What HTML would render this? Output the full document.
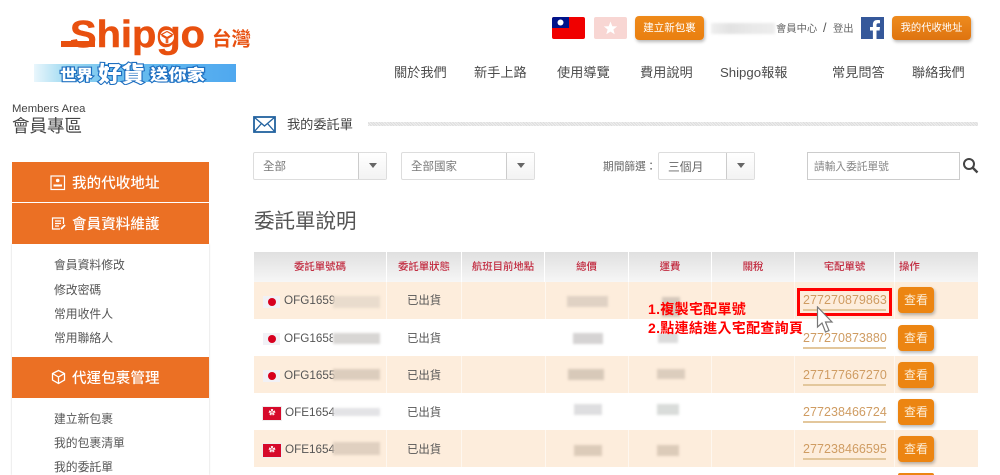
<!DOCTYPE html>
<html lang="zh-Hant"><head><meta charset="utf-8"><title>我的委託單</title>
<style>
html,body{margin:0;padding:0;background:#fff;overflow:hidden}
#p{position:relative;width:1000px;height:475px;overflow:hidden;background:#fff;font-family:"Liberation Sans","Noto Sans CJK TC",sans-serif;color:#555}
#p div,#p span,#p a,#p svg{position:absolute;white-space:nowrap}
.t{line-height:1}
.nav{top:66px;font-size:13.2px;line-height:14px;color:#4d4d4d}
.btn{background:linear-gradient(#ef8a1a,#e97f10);border-radius:4px;color:#fff;text-align:center;box-shadow:1px 2px 3px rgba(0,0,0,.28)}
.sh{left:12px;width:197px;background:#eb7024;color:#fff;font-size:14.5px;font-weight:500;letter-spacing:.1px}
.sh b{position:absolute;left:60px;font-weight:500;line-height:20px;top:12px;white-space:nowrap}
.si{left:54px;font-size:11.8px;line-height:14px;color:#555}
.sel{top:152px;height:26px;border:1px solid #ddd;border-radius:2px;background:#fff}
.sel i{position:absolute;top:0;bottom:0;right:0;width:27px;border-left:1px solid #ccc;background:linear-gradient(#fff,#f3f3f3)}
.sel i:after{content:"";position:absolute;left:10px;top:10px;border-left:4px solid transparent;border-right:4px solid transparent;border-top:5px solid #666}
.sel span{left:9px;top:8px;font-size:11.5px;line-height:13px;color:#777}
.th{top:252px;height:30px;background:linear-gradient(#e0e0e0,#f6f6f6);color:#c22b40;font-size:10.4px;font-weight:500;line-height:32px;text-align:center}
.row{left:254px;width:724px;height:37px}
.o{background:#fdeddc}
.v{top:0;width:1px;height:37px;background:rgba(255,255,255,.55)}
.num{left:284px;font-size:11.7px;line-height:15px;color:#555}
.st{left:407px;font-size:11.4px;line-height:14px;color:#555}
.lk{left:803px;width:83px;font-size:12.5px;line-height:15px;color:#cf9c62;border-bottom:2px solid #e3c79c;padding-bottom:1px;letter-spacing:.04px}
.ck{left:898px;width:36px;height:26px;line-height:26px;font-size:12px;color:#fdeed8;background:#ec8512}
.fl{left:263px;width:17px;height:12px;background:#f1f1f6}
.fl:after{content:"";position:absolute;left:4.5px;top:2px;width:8px;height:8px;border-radius:50%;background:#d7001f}
.hk{left:263px;width:18px;height:13px;background:#d60a2b;outline:1px solid #eee;color:#fff;font-size:7px;line-height:13px;text-align:center}
.bl{filter:blur(1.2px)}
.rd{left:648px;color:#f00;font-weight:700;font-size:14px;line-height:16px;letter-spacing:.3px}
</style></head><body><div id="p">

<!-- logo -->
<svg style="left:55px;top:12px" width="205" height="56" viewBox="0 0 205 56">
<path d="M6 29H40V35H6Z" fill="#e8500f"/>
<text x="15" y="35" font-family="Liberation Sans" font-weight="700" font-size="38" fill="#e8500f" stroke="#e8500f" stroke-width=".5" textLength="135" lengthAdjust="spacingAndGlyphs">Shipgo</text>
<circle cx="112" cy="25" r="7" fill="#fff"/>
<path d="M112 19.500l5.500 3-5.500 3-5.500-3zM106.500 23.500l4.800 2.800v5M117.500 23.500l-4.800 2.800v5" fill="none" stroke="#e8500f" stroke-width="1.200"/>
<text x="157" y="33.500" font-family="Liberation Sans,Noto Sans CJK TC,sans-serif" font-weight="700" font-size="19.500" fill="#e8500f">台灣</text>
</svg>
<div style="left:34px;top:64px;width:202px;height:18px;background:linear-gradient(90deg,#e9f6fc 0,#a5dcf2 15%,#6cc0ee 40%,#4fa8ef 100%)"></div>
<svg style="left:58px;top:59px" width="150" height="26" viewBox="0 0 150 26">
<g font-family="Liberation Sans,Noto Sans CJK TC,sans-serif" font-weight="900" fill="#fff" stroke="#1f6fc0" stroke-width="2.200" paint-order="stroke">
<text x="2" y="21" font-size="15" textLength="33" lengthAdjust="spacingAndGlyphs">世界</text>
<text x="40" y="23" font-size="22" textLength="47" lengthAdjust="spacingAndGlyphs">好貨</text>
<text x="92" y="21" font-size="15.500" textLength="55" lengthAdjust="spacingAndGlyphs">送你家</text>
</g></svg>

<!-- top bar -->
<svg style="left:552px;top:17px" width="33" height="22" viewBox="0 0 33 22"><rect width="33" height="22" rx="2" fill="#f00000"/><path d="M2 0H17V11H0V2Q0 0 2 0Z" fill="#00138a"/><circle cx="8.500" cy="5.500" r="3" fill="#fff"/></svg>
<svg style="left:594px;top:17px" width="33" height="22" viewBox="0 0 33 22"><rect width="33" height="22" rx="2" fill="#f8d6d3"/><path d="M16.500 4.500l1.800 4.700 4.900.2-3.800 3.100 1.300 4.800-4.200-2.700-4.200 2.700 1.300-4.800-3.800-3.100 4.900-.2z" fill="#fff"/></svg>
<div class="btn" style="left:635px;top:16px;width:69px;height:24px;line-height:25px;font-size:10.500px">建立新包裹</div>
<div class="bl" style="left:711px;top:23px;width:64px;height:11px;background:linear-gradient(90deg,#efefef,#e2e2e2 30%,#e8e8e8 60%,#ededed)"></div>
<div class="t" style="left:776px;top:23px;font-size:10.300px;line-height:13px;color:#666">會員中心</div>
<div class="t" style="left:823px;top:21px;font-size:12.500px;line-height:14px;color:#555">/</div>
<div class="t" style="left:833px;top:23px;font-size:10.300px;line-height:13px;color:#666">登出</div>
<svg style="left:861px;top:17px" width="23" height="22" viewBox="0 0 23 22"><rect width="23" height="22" fill="#35589a"/><path d="M15.500 22V13.500H18.600L19 10H15.500V8C15.500 6.800 16 6.200 17.200 6.200H19V3.200C18.300 3.100 17.300 3 16.300 3 13.600 3 11.900 4.600 11.900 7.500V10H9V13.500H11.900V22Z" fill="#fff"/></svg>
<div class="btn" style="left:892px;top:16px;width:79px;height:24px;line-height:25px;font-size:10.300px;background:linear-gradient(#ee8b1e,#de7410)">我的代收地址</div>

<!-- nav -->
<div class="nav" style="left:394px">關於我們</div>
<div class="nav" style="left:474px">新手上路</div>
<div class="nav" style="left:557px">使用導覽</div>
<div class="nav" style="left:640px">費用說明</div>
<div class="nav" style="left:720px">Shipgo報報</div>
<div class="nav" style="left:832px">常見問答</div>
<div class="nav" style="left:912px">聯絡我們</div>

<!-- side -->
<div class="t" style="left:12px;top:103px;font-size:11.300px;line-height:13px;color:#444">Members Area</div>
<div class="t" style="left:12px;top:117px;font-size:17.500px;line-height:19px;color:#444">會員專區</div>
<div style="left:12px;top:244px;width:197px;height:231px;box-shadow:0 0 2px rgba(0,0,0,.2)"></div>
<div class="sh" style="top:162px;height:40px"><b>我的代收地址</b></div>
<div class="sh" style="top:203px;height:41px"><b>會員資料維護</b></div>
<div class="sh" style="top:357px;height:41px"><b>代運包裹管理</b></div>
<svg style="left:50px;top:175px" width="16" height="16" viewBox="0 0 16 16" fill="none" stroke="#fff"><rect x="1" y="1" width="13.500" height="13.500" stroke-width="1.200"/><circle cx="7.700" cy="5.500" r="1.800" fill="#fff" stroke="none"/><path d="M3.500 11.500h8.500v-2h-8.500z" fill="#fff" stroke="none"/></svg>
<svg style="left:51px;top:216px" width="16" height="16" viewBox="0 0 16 16" fill="none" stroke="#fff" stroke-width="1.200"><path d="M12.500 8V2H1.500V13H9"/><path d="M4 5H10M4 7.500H10M4 10H8" /><path d="M10 13L14 9" stroke-width="1.800"/></svg>
<svg style="left:51px;top:369px" width="15" height="16" viewBox="0 0 15 16" fill="none" stroke="#fff" stroke-width="1.300"><path d="M7.500 1.500L13.500 4.500V11L7.500 14.500 1.500 11V4.500ZM1.500 4.500L7.500 8 13.500 4.500M7.500 8V14.500"/></svg>
<div class="si" style="top:258px">會員資料修改</div>
<div class="si" style="top:283px">修改密碼</div>
<div class="si" style="top:307px">常用收件人</div>
<div class="si" style="top:331px">常用聯絡人</div>
<div class="si" style="top:412px">建立新包裹</div>
<div class="si" style="top:436px">我的包裹清單</div>
<div class="si" style="top:460px">我的委託單</div>

<!-- title -->
<svg style="left:253px;top:116px" width="23" height="17" viewBox="0 0 23 17" fill="none" stroke="#22629f"><rect x="1" y="1" width="21" height="15" stroke-width="1.800"/><path d="M1 1L11.500 10 22 1M1 16L8.500 7.500M22 16L14.500 7.500" stroke-width="1.300"/></svg>
<div class="t" style="left:287px;top:117px;font-size:13.200px;line-height:15px;color:#444">我的委託單</div>
<div style="left:368px;top:122px;width:610px;height:4px;background:repeating-linear-gradient(45deg,#ddd 0 1px,#efefef 1px 2px)"></div>

<!-- filters -->
<div class="sel" style="left:253px;width:132px"><span>全部</span><i></i></div>
<div class="sel" style="left:401px;width:132px"><span>全部國家</span><i></i></div>
<div class="t" style="left:603px;top:161px;font-size:10.700px;line-height:13px;color:#666">期間篩選：</div>
<div class="sel" style="left:658px;width:95px"><span style="font-size:11.800px;color:#666">三個月</span><i></i></div>
<div style="left:807px;top:152px;width:151px;height:26px;border:1px solid #ccc;background:#fff"><span style="left:6px;top:8px;font-size:10.700px;line-height:13px;color:#888">請輸入委託單號</span></div>
<svg style="left:962px;top:157px" width="17" height="17" viewBox="0 0 17 17" fill="none" stroke="#444" stroke-width="2"><circle cx="7" cy="7" r="5"/><path d="M10.500 10.500L15.500 15.500" stroke-width="2.400"/></svg>

<div class="t" style="left:254px;top:210px;font-size:20.500px;line-height:24px;color:#555">委託單說明</div>

<!-- table head -->
<div class="th" style="left:254px;width:132px">委託單號碼</div>
<div class="th" style="left:387px;width:74px">委託單狀態</div>
<div class="th" style="left:462px;width:82px">航班目前地點</div>
<div class="th" style="left:545px;width:83px">總價</div>
<div class="th" style="left:629px;width:82px">運費</div>
<div class="th" style="left:712px;width:82px">關稅</div>
<div class="th" style="left:795px;width:99px">宅配單號</div>
<div class="th" style="left:895px;width:83px;text-align:left;text-indent:4px">操作</div>

<!-- rows -->
<div class="row o" style="top:282px"><div class="v" style="left:132px"></div><div class="v" style="left:207px"></div><div class="v" style="left:291px"></div><div class="v" style="left:374px"></div><div class="v" style="left:457px"></div><div class="v" style="left:540px"></div><div class="v" style="left:640px"></div></div>
<div class="row" style="top:319px"></div>
<div class="row o" style="top:356px"><div class="v" style="left:132px"></div><div class="v" style="left:207px"></div><div class="v" style="left:291px"></div><div class="v" style="left:374px"></div><div class="v" style="left:457px"></div><div class="v" style="left:540px"></div><div class="v" style="left:640px"></div></div>
<div class="row" style="top:393px"></div>
<div class="row o" style="top:430px"><div class="v" style="left:132px"></div><div class="v" style="left:207px"></div><div class="v" style="left:291px"></div><div class="v" style="left:374px"></div><div class="v" style="left:457px"></div><div class="v" style="left:540px"></div><div class="v" style="left:640px"></div></div>

<div class="fl" style="top:296px"></div><div class="num" style="top:293px">OFG1659</div>
<div class="fl" style="top:333px"></div><div class="num" style="top:331px">OFG1658</div>
<div class="fl" style="top:370px"></div><div class="num" style="top:368px">OFG1655</div>
<div class="hk" style="top:407px">✿</div><div class="num" style="top:405px;left:285px">OFE1654</div>
<div class="hk" style="top:444px">✿</div><div class="num" style="top:442px;left:285px">OFE1654</div>

<!-- blurred patches -->
<div class="bl" style="left:333px;top:296px;width:47px;height:12px;background:#e9dccd"></div>
<div style="left:333px;top:325px;width:47px;height:26px;background:#fff"></div>
<div class="bl" style="left:333px;top:333px;width:47px;height:11px;background:#d8d6d4"></div>
<div class="bl" style="left:333px;top:369px;width:47px;height:11px;background:#dccdbd"></div>
<div class="bl" style="left:333px;top:408px;width:47px;height:8px;background:#e3e3e6"></div>
<div class="bl" style="left:333px;top:442px;width:47px;height:13px;background:#e0d0c0"></div>

<div class="st" style="top:294px">已出貨</div>
<div class="st" style="top:332px">已出貨</div>
<div class="st" style="top:369px">已出貨</div>
<div class="st" style="top:406px">已出貨</div>
<div class="st" style="top:443px">已出貨</div>

<div class="bl" style="left:567px;top:296px;width:41px;height:11px;background:#e0d2c4"></div>
<div class="bl" style="left:573px;top:333px;width:30px;height:11px;background:#d5d3d3"></div>
<div class="bl" style="left:568px;top:369px;width:36px;height:11px;background:#d8c9b9"></div>
<div class="bl" style="left:574px;top:404px;width:28px;height:11px;background:#dedee0"></div>
<div class="bl" style="left:574px;top:445px;width:28px;height:11px;background:#dccbb9"></div>

<div class="bl" style="left:662px;top:297px;width:18px;height:20px;background:#d5c8bb"></div>
<div class="bl" style="left:658px;top:333px;width:20px;height:10px;background:#dcdcdc"></div>
<div class="bl" style="left:657px;top:369px;width:28px;height:10px;background:#dccdbd"></div>
<div class="bl" style="left:657px;top:404px;width:22px;height:11px;background:#d9dcda"></div>
<div class="bl" style="left:657px;top:445px;width:22px;height:11px;background:#dccbb9"></div>

<div class="lk" style="top:293px">277270879863</div>
<div class="lk" style="top:331px">277270873880</div>
<div class="lk" style="top:368px">277177667270</div>
<div class="lk" style="top:405px">277238466724</div>
<div class="lk" style="top:442px">277238466595</div>

<div class="btn ck" style="top:287px">查看</div>
<div class="btn ck" style="top:325px">查看</div>
<div class="btn ck" style="top:362px">查看</div>
<div class="btn ck" style="top:399px">查看</div>
<div class="btn ck" style="top:436px">查看</div>
<div class="ck" style="top:473px;height:2px;border-radius:4px 4px 0 0"></div>

<!-- annotation -->
<div style="left:797px;top:288px;width:89px;height:22px;border:3px solid #f00"></div>
<div class="rd" style="top:301px">1.複製宅配單號</div>
<div class="rd" style="top:320px">2.點連結進入宅配查詢頁</div>
<svg style="left:816px;top:306px" width="18" height="29" viewBox="0 0 18 29"><path d="M1.500 1V21L6 17 9.500 26 13 24.500 9.500 16H16Z" fill="#fff" stroke="#777" stroke-width="1.200"/></svg>
</div></body></html>
